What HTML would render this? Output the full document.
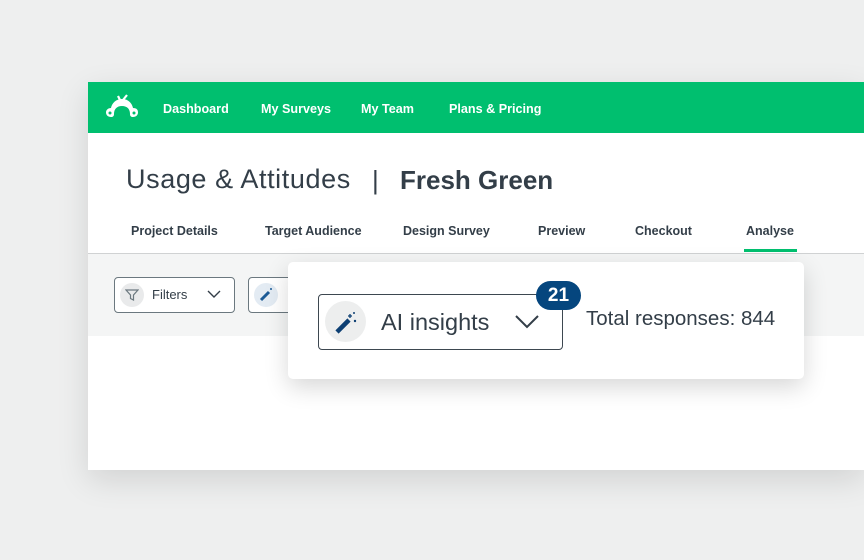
<!DOCTYPE html>
<html><head><style>
*{margin:0;padding:0;box-sizing:border-box}
body{width:864px;height:560px;background:#eeefef;font-family:"Liberation Sans",sans-serif;position:relative;overflow:hidden}
.card{position:absolute;left:88px;top:82px;width:776px;height:388px;background:#fff;box-shadow:0 10px 30px rgba(0,0,0,.12)}
.nav{height:51px;background:#00bf6f;position:relative}
.nav a{position:absolute;top:20px;color:#fff;font-size:12.6px;font-weight:bold}
.t{position:absolute;top:82px;color:#333e48;white-space:nowrap}
.tabs span{position:absolute;top:142px;font-size:12.5px;font-weight:bold;color:#333e48}
.line{position:absolute;left:0;top:171px;width:776px;height:1px;background:#d0d2d3}
.band{position:absolute;left:0;top:172px;width:776px;height:82px;background:#f4f5f5}
.btn{position:absolute;border:1.5px solid #6b787f;border-radius:4px;background:#fff}
.pop{position:absolute;left:288px;top:262px;width:516px;height:117px;background:#fff;border-radius:5px;box-shadow:0 8px 24px rgba(0,0,0,.16)}
</style></head><body>
<div class="card">
<div class="nav">
<svg style="position:absolute;left:16px;top:11px" width="36" height="28" viewBox="0 0 36 28"><path d="M18 6c-6 0-10 4-11 9-3 0-5 2-5 4.5S4 24 7 24c2 0 3-1 3-3 0-5 3-8 8-8s8 3 8 8c0 2 1 3 3 3 3 0 5-2 5-4.5S33 15 29 15c-1-5-5-9-11-9z" fill="#fff"/><path d="M16 7l-2-4M19 7l4-5" stroke="#fff" stroke-width="2.2"/><circle cx="6" cy="20" r="1.5" fill="#00bf6f"/><circle cx="30" cy="20" r="1.5" fill="#00bf6f"/></svg>
<a style="left:75px">Dashboard</a><a style="left:173px">My Surveys</a><a style="left:273px">My Team</a><a style="left:361px">Plans &amp; Pricing</a>
</div>
<span class="t" style="left:38px;font-size:27px;letter-spacing:.6px">Usage &amp; Attitudes</span>
<span class="t" style="left:284px;font-size:26px;top:83px">|</span>
<span class="t" style="left:312px;font-size:26px;top:83px;font-weight:bold">Fresh Green</span>
<div class="tabs"><span style="left:43px">Project Details</span><span style="left:177px">Target Audience</span><span style="left:315px">Design Survey</span><span style="left:450px">Preview</span><span style="left:547px">Checkout</span><span style="left:658px">Analyse</span></div>
<div style="position:absolute;left:656px;top:167px;width:53px;height:3px;background:#00bf6f"></div>
<div class="line"></div>
<div class="band">
<div class="btn" style="left:26px;top:23px;width:121px;height:36px">
<div style="position:absolute;left:5px;top:5px;width:24px;height:24px;border-radius:50%;background:#e9eaeb"></div>
<svg style="position:absolute;left:10px;top:10px" width="14" height="14" viewBox="0 0 14 14"><path d="M1 2h12l-4.5 5v5l-3-1.5V7z" fill="none" stroke="#6b787f" stroke-width="1.2"/></svg>
<span style="position:absolute;left:37px;top:9px;font-size:13px;color:#333e48">Filters</span>
<svg style="position:absolute;left:92px;top:12px" width="14" height="9"><path d="M1 1l6 6 6-6" fill="none" stroke="#333e48" stroke-width="1.4"/></svg>
</div>
<div class="btn" style="left:160px;top:23px;width:60px;height:36px">
<div style="position:absolute;left:5px;top:5px;width:24px;height:24px;border-radius:50%;background:#e3ebf3"></div>
<svg style="position:absolute;left:9px;top:8px" width="16" height="16" viewBox="0 0 16 16"><path d="M3 14l8-8" stroke="#1b5a96" stroke-width="3"/><circle cx="13" cy="3" r="1" fill="#1b5a96"/></svg>
</div>
</div>
</div>
<div class="pop">
<div class="btn" style="left:30px;top:32px;width:245px;height:56px;border-color:#3d4750">
<div style="position:absolute;left:6px;top:6px;width:41px;height:41px;border-radius:50%;background:#edeeee"></div>
<svg style="position:absolute;left:12px;top:12px" width="30" height="30" viewBox="0 0 30 30"><path d="M6 25l12-12" stroke="#0d3f73" stroke-width="4.5"/><path d="M19 7v4M17 9h4" stroke="#0d3f73" stroke-width="1.3"/><circle cx="24" cy="14" r="1.2" fill="#0d3f73"/><circle cx="23" cy="6" r="1" fill="#0d3f73"/></svg>
<span style="position:absolute;left:62px;top:14px;font-size:23.5px;color:#333e48">AI insights</span>
<svg style="position:absolute;left:195px;top:19px" width="26" height="16"><path d="M2 2l11 11 11-11" fill="none" stroke="#333e48" stroke-width="2"/></svg>
</div>
<div style="position:absolute;left:248px;top:19px;width:45px;height:29px;border-radius:15px;background:#05467e;color:#fff;font-weight:bold;font-size:19px;text-align:center;line-height:29px">21</div>
<span style="position:absolute;left:298px;top:45px;font-size:20.5px;color:#333e48;white-space:nowrap">Total responses: 844</span>
</div>
</body></html>
